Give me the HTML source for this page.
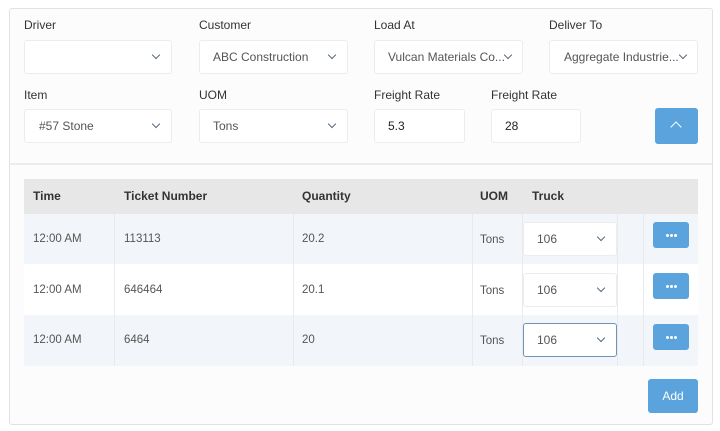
<!DOCTYPE html>
<html><head><style>
*{box-sizing:border-box;margin:0;padding:0}
body{width:720px;height:431px;background:#fff;font-family:"Liberation Sans",sans-serif;position:relative;overflow:hidden}
.a{position:absolute}
.card{left:9px;top:8px;width:704px;height:417px;border:1px solid #e2e2e2;border-radius:3px;background:#fcfcfc}
.lbl{font-size:12px;color:#333}
.sel{background:#fff;border:1px solid #ececec;border-radius:3px;font-size:12px;color:#555;padding-left:13px;line-height:32px;white-space:nowrap;overflow:hidden}
.chev{position:absolute;width:6px;height:6px;border-right:1.2px solid #5a6a7a;border-bottom:1.2px solid #5a6a7a;transform:rotate(45deg)}
.btn{background:#5aa3dc;border-radius:3px;color:#fff}
.th{font-size:12px;font-weight:bold;color:#333;top:189px}
.td{font-size:11.5px;color:#555}
.dots{display:flex;justify-content:center;align-items:center;gap:1px}
.dots i{display:block;width:3px;height:3px;border-radius:50%;background:#fff}
</style></head><body>
<div class="a card"></div>
<div class="a lbl" style="left:24px;top:18px">Driver</div>
<div class="a lbl" style="left:199px;top:18px">Customer</div>
<div class="a lbl" style="left:374px;top:18px">Load At</div>
<div class="a lbl" style="left:549px;top:18px">Deliver To</div>
<div class="a sel" style="left:24px;top:40px;width:148px;height:34px"><span class="chev" style="left:128px;top:11px"></span></div>
<div class="a sel" style="left:199px;top:40px;width:149px;height:34px">ABC Construction<span class="chev" style="left:129px;top:11px"></span></div>
<div class="a sel" style="left:374px;top:40px;width:149px;height:34px">Vulcan Materials Co...<span class="chev" style="left:130px;top:11px;background:#fff"></span></div>
<div class="a sel" style="left:549px;top:40px;width:149px;height:34px;padding-left:14px">Aggregate Industrie...<span class="chev" style="left:130px;top:11px;background:#fff"></span></div>
<div class="a lbl" style="left:24px;top:88px">Item</div>
<div class="a lbl" style="left:199px;top:88px">UOM</div>
<div class="a lbl" style="left:374px;top:88px">Freight Rate</div>
<div class="a lbl" style="left:491px;top:88px">Freight Rate</div>
<div class="a sel" style="left:24px;top:109px;width:148px;height:34px;padding-left:14px">#57 Stone<span class="chev" style="left:128px;top:11px"></span></div>
<div class="a sel" style="left:199px;top:109px;width:149px;height:34px">Tons<span class="chev" style="left:129px;top:11px"></span></div>
<div class="a sel" style="left:374px;top:109px;width:91px;height:34px;color:#222;padding-left:13px">5.3</div>
<div class="a sel" style="left:491px;top:109px;width:90px;height:34px;color:#222;padding-left:13px">28</div>
<div class="a btn" style="left:655px;top:108px;width:43px;height:36px"><span class="chev" style="left:17px;top:15px;width:8px;height:8px;border-width:1.5px;border-color:#fff;transform:rotate(225deg)"></span></div>
<div class="a" style="left:10px;top:163px;width:702px;height:2px;background:#ececec"></div>
<div class="a" style="left:24px;top:179px;width:674px;height:35px;background:#e7e7e7"></div>
<div class="a" style="left:24px;top:214px;width:674px;height:50px;background:#f2f6fa"></div>
<div class="a" style="left:24px;top:264px;width:674px;height:51px;background:#fff"></div>
<div class="a" style="left:24px;top:315px;width:674px;height:51px;background:#f2f6fa"></div>
<div class="a" style="left:114px;top:214px;width:1px;height:152px;background:#e8eaec"></div>
<div class="a" style="left:293px;top:214px;width:1px;height:152px;background:#e8eaec"></div>
<div class="a" style="left:472px;top:214px;width:1px;height:152px;background:#e8eaec"></div>
<div class="a" style="left:522px;top:214px;width:1px;height:152px;background:#e8eaec"></div>
<div class="a" style="left:617px;top:214px;width:1px;height:152px;background:#e8eaec"></div>
<div class="a" style="left:643px;top:214px;width:1px;height:152px;background:#e8eaec"></div>
<div class="a th" style="left:33px">Time</div>
<div class="a th" style="left:124px">Ticket Number</div>
<div class="a th" style="left:302px">Quantity</div>
<div class="a th" style="left:480px">UOM</div>
<div class="a th" style="left:532px">Truck</div>

<div class="a td" style="left:33px;top:233px">12:00 AM</div>
<div class="a td" style="left:124px;top:233px">113113</div>
<div class="a td" style="left:302px;top:233px">20.2</div>
<div class="a td" style="left:480px;top:234px">Tons</div>
<div class="a sel" style="left:523px;top:222px;width:94px;height:34px;padding-left:13px">106<span class="chev" style="left:74px;top:11px"></span></div>
<div class="a btn dots" style="left:653px;top:222px;width:36px;height:26px"><i></i><i></i><i></i></div>

<div class="a td" style="left:33px;top:284px">12:00 AM</div>
<div class="a td" style="left:124px;top:284px">646464</div>
<div class="a td" style="left:302px;top:284px">20.1</div>
<div class="a td" style="left:480px;top:285px">Tons</div>
<div class="a sel" style="left:523px;top:273px;width:94px;height:34px;padding-left:13px">106<span class="chev" style="left:74px;top:11px"></span></div>
<div class="a btn dots" style="left:653px;top:273px;width:36px;height:26px"><i></i><i></i><i></i></div>

<div class="a td" style="left:33px;top:334px">12:00 AM</div>
<div class="a td" style="left:124px;top:334px">6464</div>
<div class="a td" style="left:302px;top:334px">20</div>
<div class="a td" style="left:480px;top:335px">Tons</div>
<div class="a sel" style="left:523px;top:323px;width:94px;height:34px;padding-left:13px;border-color:#6f93b8">106<span class="chev" style="left:74px;top:11px"></span></div>
<div class="a btn dots" style="left:653px;top:324px;width:36px;height:26px"><i></i><i></i><i></i></div>

<div class="a btn" style="left:648px;top:379px;width:50px;height:34px;font-size:12px;text-align:center;line-height:34px">Add</div>
</body></html>
